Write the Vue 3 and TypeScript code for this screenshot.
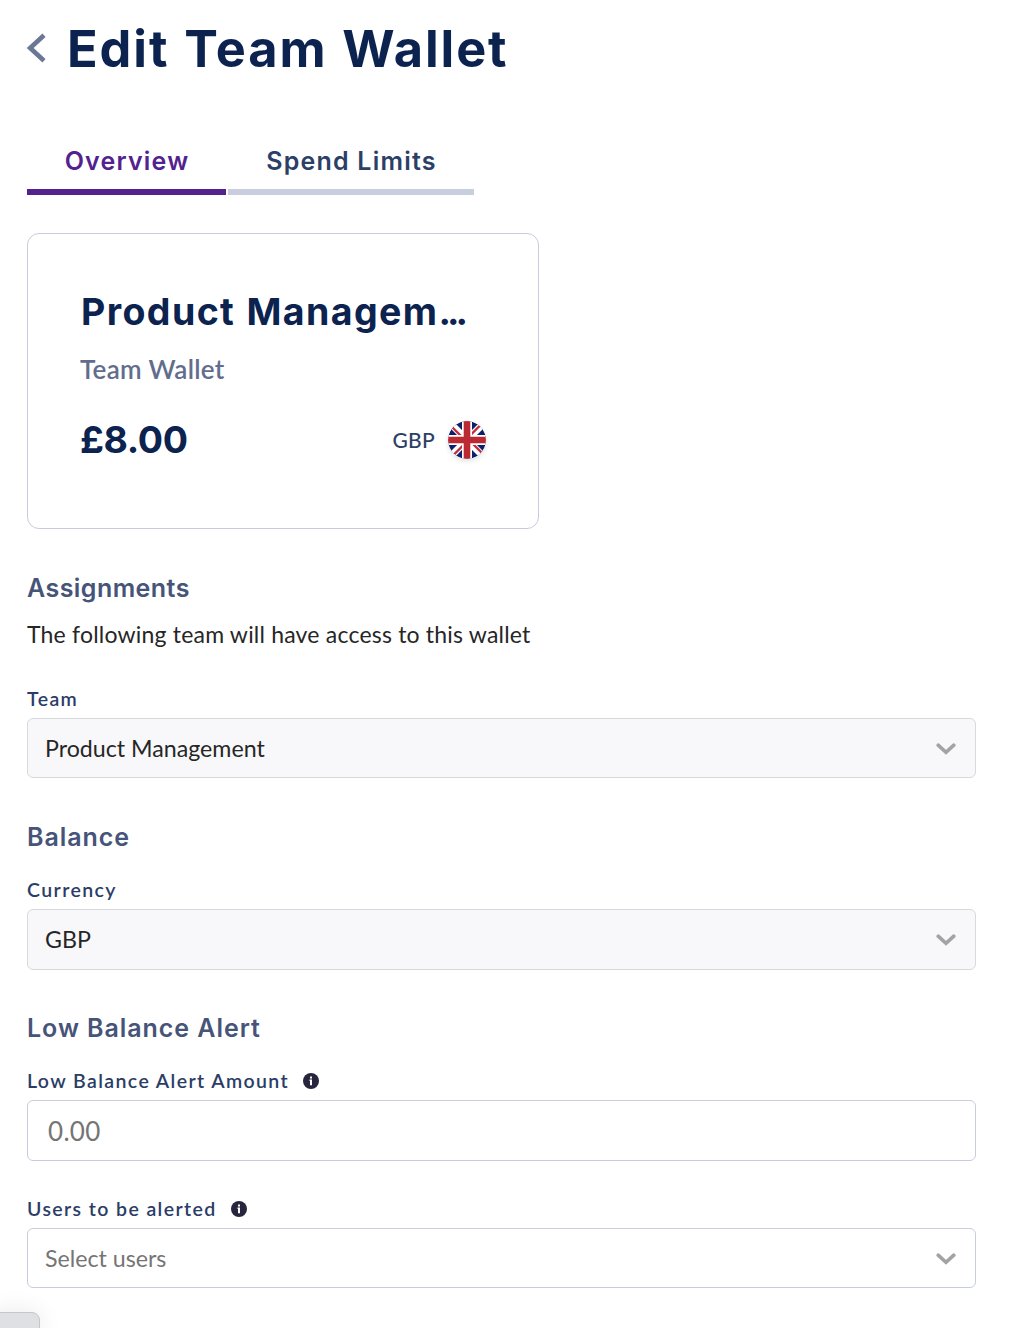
<script setup lang="ts">
import { ref } from 'vue'

type TabId = 'overview' | 'limits'

const tabs: { id: TabId; label: string }[] = [
  { id: 'overview', label: 'Overview' },
  { id: 'limits', label: 'Spend Limits' },
]
const activeTab = ref<TabId>('overview')
const amount = ref('')
</script>

<template>
  <main class="page">
    <header class="header">
      <svg class="back" width="20" height="30" viewBox="0 0 20 30" aria-label="Back">
        <path d="M17 2.200 3.200 15 17 27.800" fill="none" stroke="#6b7797" stroke-width="4.600" />
      </svg>
      <h1 class="title">Edit Team Wallet</h1>
    </header>

    <nav class="tabs">
      <button
        v-for="tab in tabs"
        :key="tab.id"
        class="tab"
        :class="[tab.id, { active: activeTab === tab.id }]"
        @click="activeTab = tab.id"
      >
        <span>{{ tab.label }}</span>
      </button>
    </nav>

    <section class="card">
      <h2 class="card-name">Product Managem<span class="dots">...</span></h2>
      <p class="card-type">Team Wallet</p>
      <div class="card-row">
        <span class="balance">£8.00</span>
        <span class="currency">
          <span class="code">GBP</span>
          <svg class="flag" width="38" height="38" viewBox="0 0 38 38">
            <defs>
              <clipPath id="disc"><circle cx="19" cy="19" r="19" /></clipPath>
            </defs>
            <g clip-path="url(#disc)">
              <rect width="38" height="38" fill="#0a1f6e" />
              <path d="M0 0 38 38M38 0 0 38" stroke="#fff" stroke-width="7" />
              <path d="M3 5 16 18M35 33 22 20M33.500 3 21 15.500M4.500 35 17 22.500" stroke="#c22b38" stroke-width="2.400" />
              <path d="M19 0V38M0 19H38" stroke="#fff" stroke-width="10" />
              <path d="M19 0V38M0 19H38" stroke="#bb2933" stroke-width="6.600" />
            </g>
          </svg>
        </span>
      </div>
    </section>

    <h3 class="heading assignments">Assignments</h3>
    <p class="description">The following team will have access to this wallet</p>
    <div class="label"><span>Team</span></div>
    <div class="control disabled">
      <span class="value">Product Management</span>
      <svg class="chevron" width="20" height="12" viewBox="0 0 20 12"><path d="M2.200 2.200 10 9.300 17.800 2.200" /></svg>
    </div>

    <h3 class="heading balance-h">Balance</h3>
    <div class="label near"><span>Currency</span></div>
    <div class="control disabled tall">
      <span class="value">GBP</span>
      <svg class="chevron" width="20" height="12" viewBox="0 0 20 12"><path d="M2.200 2.200 10 9.300 17.800 2.200" /></svg>
    </div>

    <h3 class="heading alert-h">Low Balance Alert</h3>
    <div class="label near">
      <span>Low Balance Alert Amount</span>
      <svg class="info" width="16" height="16" viewBox="0 0 16 16">
        <circle cx="8" cy="8" r="8" fill="#25263d" />
        <path d="M7 3.600h2v1.800H7zM6.500 6.600H9v5.600H7V7.900h-.5z" fill="#fff" />
      </svg>
    </div>
    <input v-model="amount" class="control tall amount" placeholder="0.00" />

    <div class="label users">
      <span>Users to be alerted</span>
      <svg class="info" width="16" height="16" viewBox="0 0 16 16">
        <circle cx="8" cy="8" r="8" fill="#25263d" />
        <path d="M7 3.600h2v1.800H7zM6.500 6.600H9v5.600H7V7.900h-.5z" fill="#fff" />
      </svg>
    </div>
    <div class="control">
      <span class="value placeholder">Select users</span>
      <svg class="chevron" width="20" height="12" viewBox="0 0 20 12"><path d="M2.200 2.200 10 9.300 17.800 2.200" /></svg>
    </div>

    <div class="status-bubble"></div>
  </main>
</template>

<style>
body {
  margin: 0;
  background: #fff;
}
</style>

<style scoped>
.page {
  position: relative;
  box-sizing: border-box;
  width: 1026px;
  height: 1328px;
  padding: 0 50px 0 27px;
  overflow: hidden;
  background: #fff;
  font-family: Lato, sans-serif;
  color: #262626;
}
h1, h2, h3, p { margin: 0; }
.header {
  display: flex;
  align-items: center;
  height: 98px;
}
.back { display: block; margin-bottom: 3px; }
.title {
  margin-left: 20px;
  font: 700 50.500px/60px Inter, sans-serif;
  letter-spacing: 1.900px;
  word-spacing: 1px;
  color: #0c2350;
  white-space: nowrap;
}
.tabs {
  display: flex;
  gap: 2px;
  height: 97px;
  align-items: flex-end;
}
.tab {
  box-sizing: border-box;
  height: 66px;
  padding: 4px 0 0 1px;
  border: 0;
  border-bottom: 6px solid #c8cddf;
  background: none;
  font: 600 25px/50px Inter, sans-serif;
  letter-spacing: 1.200px;
  color: #2c3f66;
  white-space: nowrap;
}
.tab.overview { width: 199px; }
.tab.limits { width: 246px; }
.tab.active { color: #54228f; border-color: #54228f; }
.card {
  box-sizing: border-box;
  width: 512px;
  height: 296px;
  margin-top: 38px;
  padding: 54px 52px 0 52px;
  border: 1px solid #c8cbde;
  border-radius: 12px;
}
.card-name {
  margin-left: 1px;
  font: 700 37.500px/48px Inter, sans-serif;
  letter-spacing: 1.400px;
  word-spacing: 1px;
  color: #0c2350;
  white-space: nowrap;
}
.dots { letter-spacing: -4px; }
.card-type {
  margin-top: 17px;
  font-size: 26px;
  line-height: 32px;
  font-weight: 600;
  letter-spacing: 0.280px;
  color: #626d8e;
}
.card-row {
  display: flex;
  justify-content: space-between;
  align-items: center;
  height: 48px;
  margin-top: 31px;
}
.balance { font: 700 37.500px/48px Inter, sans-serif; letter-spacing: -0.400px; color: #0c2350; }
.currency { display: flex; align-items: center; gap: 13px; }
.code { font-size: 21px; line-height: 28px; font-weight: 500; letter-spacing: 0.300px; color: #2c3f66; }
.flag { display: block; border-radius: 50%; box-shadow: 0 2px 5px rgba(0, 0, 0, 0.12); }
.heading {
  font: 600 25px/32px Inter, sans-serif;
  letter-spacing: 0.950px;
  color: #46547a;
}
.assignments { margin-top: 43px; letter-spacing: 0.450px; }
.balance-h { margin-top: 43px; }
.alert-h { margin-top: 42px; }
.description {
  margin-top: 16px;
  font-size: 23px;
  line-height: 28px;
  letter-spacing: 0.200px;
}
.label {
  display: flex;
  align-items: center;
  gap: 14px;
  height: 26px;
  margin: 38px 0 6px;
  font-size: 19.500px;
  line-height: 26px;
  font-weight: 600;
  letter-spacing: 1.400px;
  color: #2b3d67;
}
.label.near { margin-top: 24px; }
.label.users { margin-top: 35px; }
.info { display: block; }
.control {
  box-sizing: border-box;
  display: flex;
  align-items: center;
  justify-content: space-between;
  width: 949px;
  height: 60px;
  padding: 0 19px 0 17px;
  border: 1px solid #c8cddd;
  border-radius: 6px;
  background: #fff;
}
.control.tall { height: 61px; }
.control.disabled { background: #f8f8fb; border-color: #d8d9dd; }
.value { font-size: 23.200px; line-height: 30px; }
.tall .value { line-height: 28px; margin-bottom: 1px; }
.placeholder { color: #757575; }
.chevron { display: block; margin-top: 2px; }
.tall .chevron { margin-top: 1px; }
.chevron path {
  fill: none;
  stroke: #a3a3a6;
  stroke-width: 3.600;
  stroke-linecap: round;
}
.amount {
  display: block;
  padding: 0 20px;
  font-family: Lato, sans-serif;
  font-size: 26px;
  letter-spacing: 0.300px;
  outline: none;
}
.amount::placeholder { color: #757575; opacity: 1; }
.status-bubble {
  position: absolute;
  left: -10px;
  bottom: -10px;
  box-sizing: border-box;
  width: 50px;
  height: 26px;
  border: 1px solid #c6c7ca;
  border-radius: 8px;
  background: #dfe0e4;
  box-shadow: 0 0 24px rgba(0, 0, 0, 0.09);
}
</style>
